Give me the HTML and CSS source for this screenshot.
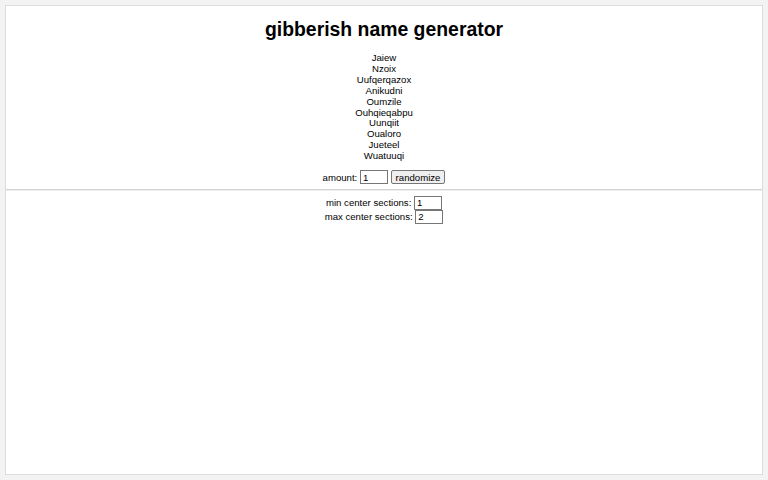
FILE: index.html
```html
<!DOCTYPE html>
<html lang="en">
<head>
  <meta charset="UTF-8" />
  <title>gibberish name generator</title>
  <link rel="stylesheet" href="styles.css">
</head>
<body>

<div class="page">
  <h1>gibberish name generator</h1>

  <div class="names">
    <div>Jaiew</div>
    <div>Nzoix</div>
    <div>Uufqerqazox</div>
    <div>Anikudni</div>
    <div>Oumzile</div>
    <div>Ouhqieqabpu</div>
    <div>Uunqiit</div>
    <div>Oualoro</div>
    <div>Jueteel</div>
    <div>Wuatuuqi</div>
  </div>

  <div class="controls">
    <label>amount: <input type="text" class="num" value="1"></label>
    <button>randomize</button>
  </div>

  <hr>

  <div class="options">
    <label>min center sections: <input type="text" class="num" value="1"></label><br>
    <label>max center sections: <input type="text" class="num" value="2"></label>
  </div>
</div>

</body>
</html>
```

FILE: styles.css
```css
body {
  margin: 0;
  padding: 5px;
  background: #f3f3f3;
  font-family: "Liberation Sans", Arial, sans-serif;
  font-size: 9.6px;
  color: #000;
}
.page {
  height: 468px;
  background: #fff;
  border: 1px solid #dcdcdc;
  text-align: center;
}
h1 {
  font-size: 19.4px;
  margin: 0;
  padding-top: 12px;
  line-height: 23px;
}
.names {
  margin-top: 12px;
  line-height: 10.9px;
}
.controls {
  margin-top: 8px;
}
input.num {
  width: 22px;
  height: 12px;
  padding: 0 2px;
  border: 1px solid #767676;
  font: inherit;
}
button {
  font: inherit;
  padding: 0 4px;
  height: 14px;
  border: 1px solid #767676;
  border-radius: 2px;
  background: #efefef;
}
hr {
  margin: 5px 0 5px;
  border: 0;
  border-top: 1px solid #d4d4d4;
  border-bottom: 1px solid #eee;
}
.options {
  line-height: 14px;
}
```
